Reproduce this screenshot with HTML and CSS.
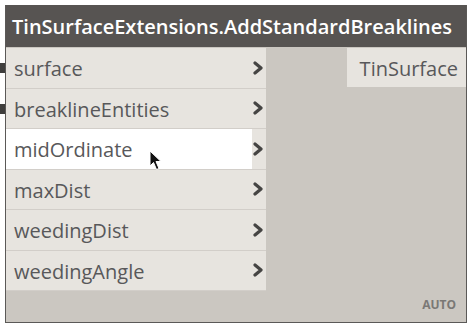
FILE: index.html
```html
<!doctype html>
<html>
  <head>
    <title>AddStandardBreaklines</title>
    <link rel="stylesheet" href="styles.css">
  </head>
  <body>
    <div class="node">
      <div class="header">TinSurfaceExtensions.AddStandardBreaklines</div>
      <div class="ports">
        <div class="inputs">
          <div class="row required"><span class="label">surface</span><span class="arrow"><svg width="10" height="14" viewBox="0 0 10 14"><path d="M2 2 L8 7 L2 12" /></svg></span></div>
          <div class="row required"><span class="label">breaklineEntities</span><span class="arrow"><svg width="10" height="14" viewBox="0 0 10 14"><path d="M2 2 L8 7 L2 12" /></svg></span></div>
          <div class="row active"><span class="label">midOrdinate</span><span class="arrow"><svg width="10" height="14" viewBox="0 0 10 14"><path d="M2 2 L8 7 L2 12" /></svg></span></div>
          <div class="row"><span class="label">maxDist</span><span class="arrow"><svg width="10" height="14" viewBox="0 0 10 14"><path d="M2 2 L8 7 L2 12" /></svg></span></div>
          <div class="row"><span class="label">weedingDist</span><span class="arrow"><svg width="10" height="14" viewBox="0 0 10 14"><path d="M2 2 L8 7 L2 12" /></svg></span></div>
          <div class="row"><span class="label">weedingAngle</span><span class="arrow"><svg width="10" height="14" viewBox="0 0 10 14"><path d="M2 2 L8 7 L2 12" /></svg></span></div>
        </div>
        <div class="outputs">
          <div class="out">TinSurface</div>
        </div>
      </div>
      <div class="footer">AUTO</div>
    </div>
    <svg class="cursor" width="14" height="22" viewBox="0 0 14 22">
      <path d="M1 1 L1 16 L4.5 12.5 L7.5 19.5 L10 18.5 L7 11.5 L12 11.5 Z" fill="#111" stroke="#fff" stroke-width="1" />
    </svg>
  </body>
</html>
```

FILE: styles.css
```css
* {
  box-sizing: border-box;
}
body {
  margin: 0;
  padding: 5px 0 0 5px;
  background: #fff;
  font-family: "Open Sans", "Noto Sans", sans-serif;
}
.node {
  width: 462px;
  height: 318px;
  border: 1px solid #5b5957;
  border-top: none;
  background: #cbc7c1;
  display: flex;
  flex-direction: column;
}
.header {
  height: 42px;
  background: #575452;
  color: #fff;
  font-size: 20px;
  font-weight: 600;
  line-height: 44px;
  padding-left: 6px;
  white-space: nowrap;
}
.ports {
  display: flex;
  padding-top: 1px;
}
.inputs {
  width: 260px;
}
.row {
  position: relative;
  display: flex;
  height: 40.5px;
  border-bottom: 1.5px solid #d2cec9;
  background: #e7e4df;
  color: #58585a;
  font-size: 20px;
}
.required::before {
  content: "";
  position: absolute;
  left: -6px;
  top: 15px;
  width: 5px;
  height: 10px;
  background: #3f3e3d;
}
.label {
  flex: 1;
  padding-left: 8px;
  line-height: 41px;
}
.active .label {
  background: #fff;
}
.arrow {
  width: 14px;
  display: flex;
  align-items: center;
  padding-left: 1px;
}
.arrow path {
  fill: none;
  stroke: #454443;
  stroke-width: 3.2;
  stroke-linecap: round;
  stroke-linejoin: round;
}
.outputs {
  flex: 1;
  display: flex;
  justify-content: flex-end;
  align-items: flex-start;
}
.out {
  width: 119px;
  height: 39px;
  background: #e7e4df;
  color: #58585a;
  font-size: 20px;
  line-height: 41px;
  text-align: right;
  padding-right: 8px;
}
.footer {
  margin-top: auto;
  height: 31px;
  text-align: right;
  padding-right: 10px;
  font-size: 12px;
  font-weight: bold;
  color: #7a7875;
  line-height: 28px;
}
.cursor {
  position: absolute;
  left: 149px;
  top: 150px;
}
```
